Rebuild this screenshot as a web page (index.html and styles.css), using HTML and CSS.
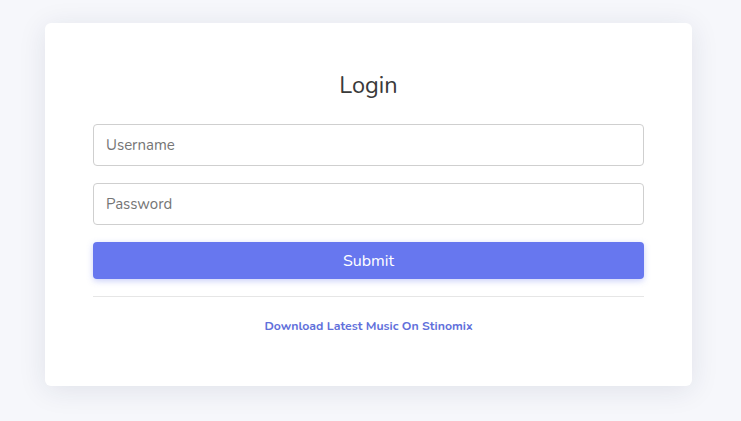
FILE: index.html
```html
<!DOCTYPE html>
<html lang="en">
<head>
    <meta charset="UTF-8">
    <meta name="viewport" content="width=device-width, initial-scale=1.0">
    <title>Login</title>
    <link rel="stylesheet" href="styles.css">
</head>
<body>
    <div class="login-card">
        <h1 class="login-title">Login</h1>
        <form class="login-form">
            <input type="text" class="login-input" placeholder="Username">
            <input type="password" class="login-input" placeholder="Password">
            <button type="submit" class="login-button">Submit</button>
        </form>
        <hr class="login-divider">
        <div class="login-footer">
            <a href="#" class="login-link">Download Latest Music On Stinomix</a>
        </div>
    </div>
</body>
</html>
```

FILE: styles.css
```css
body {
    font-family: "Nunito", "Lato", "Open Sans", sans-serif;
    margin: 0;
    padding: 23px 0 30px 45px;
    background-color: #f6f7fb;
    color: #333;
}
.login-card {
    width: 647px;
    box-sizing: border-box;
    padding: 47px 48px 51px;
    background: #ffffff;
    border-radius: 6px;
    box-shadow: 0 4px 28px rgba(30, 40, 80, 0.1);
}
.login-title {
    margin: 0 0 24px;
    font-size: 23.5px;
    line-height: 30px;
    font-weight: 400;
    text-align: center;
    color: #3a3a3a;
}
.login-form {
    display: flex;
    flex-direction: column;
    gap: 17px;
}
.login-input {
    height: 42px;
    box-sizing: border-box;
    padding: 0 12px;
    border: 1px solid #cfcfcf;
    border-radius: 4px;
    font-family: inherit;
    font-size: 15px;
    color: #333;
}
.login-input::placeholder {
    color: #757575;
}
.login-button {
    height: 37px;
    border: none;
    border-radius: 4px;
    background: #6777ef;
    color: #ffffff;
    font-family: inherit;
    font-size: 16px;
    box-shadow: 0 2px 6px rgba(103, 119, 239, 0.35);
    cursor: pointer;
}
.login-divider {
    margin: 17px 0 0;
    border: none;
    border-top: 1px solid #e6e6e6;
}
.login-footer {
    margin-top: 19px;
    text-align: center;
    line-height: 18px;
}
.login-link {
    font-size: 12.3px;
    font-weight: 700;
    color: #6170db;
    text-decoration: none;
}
```
